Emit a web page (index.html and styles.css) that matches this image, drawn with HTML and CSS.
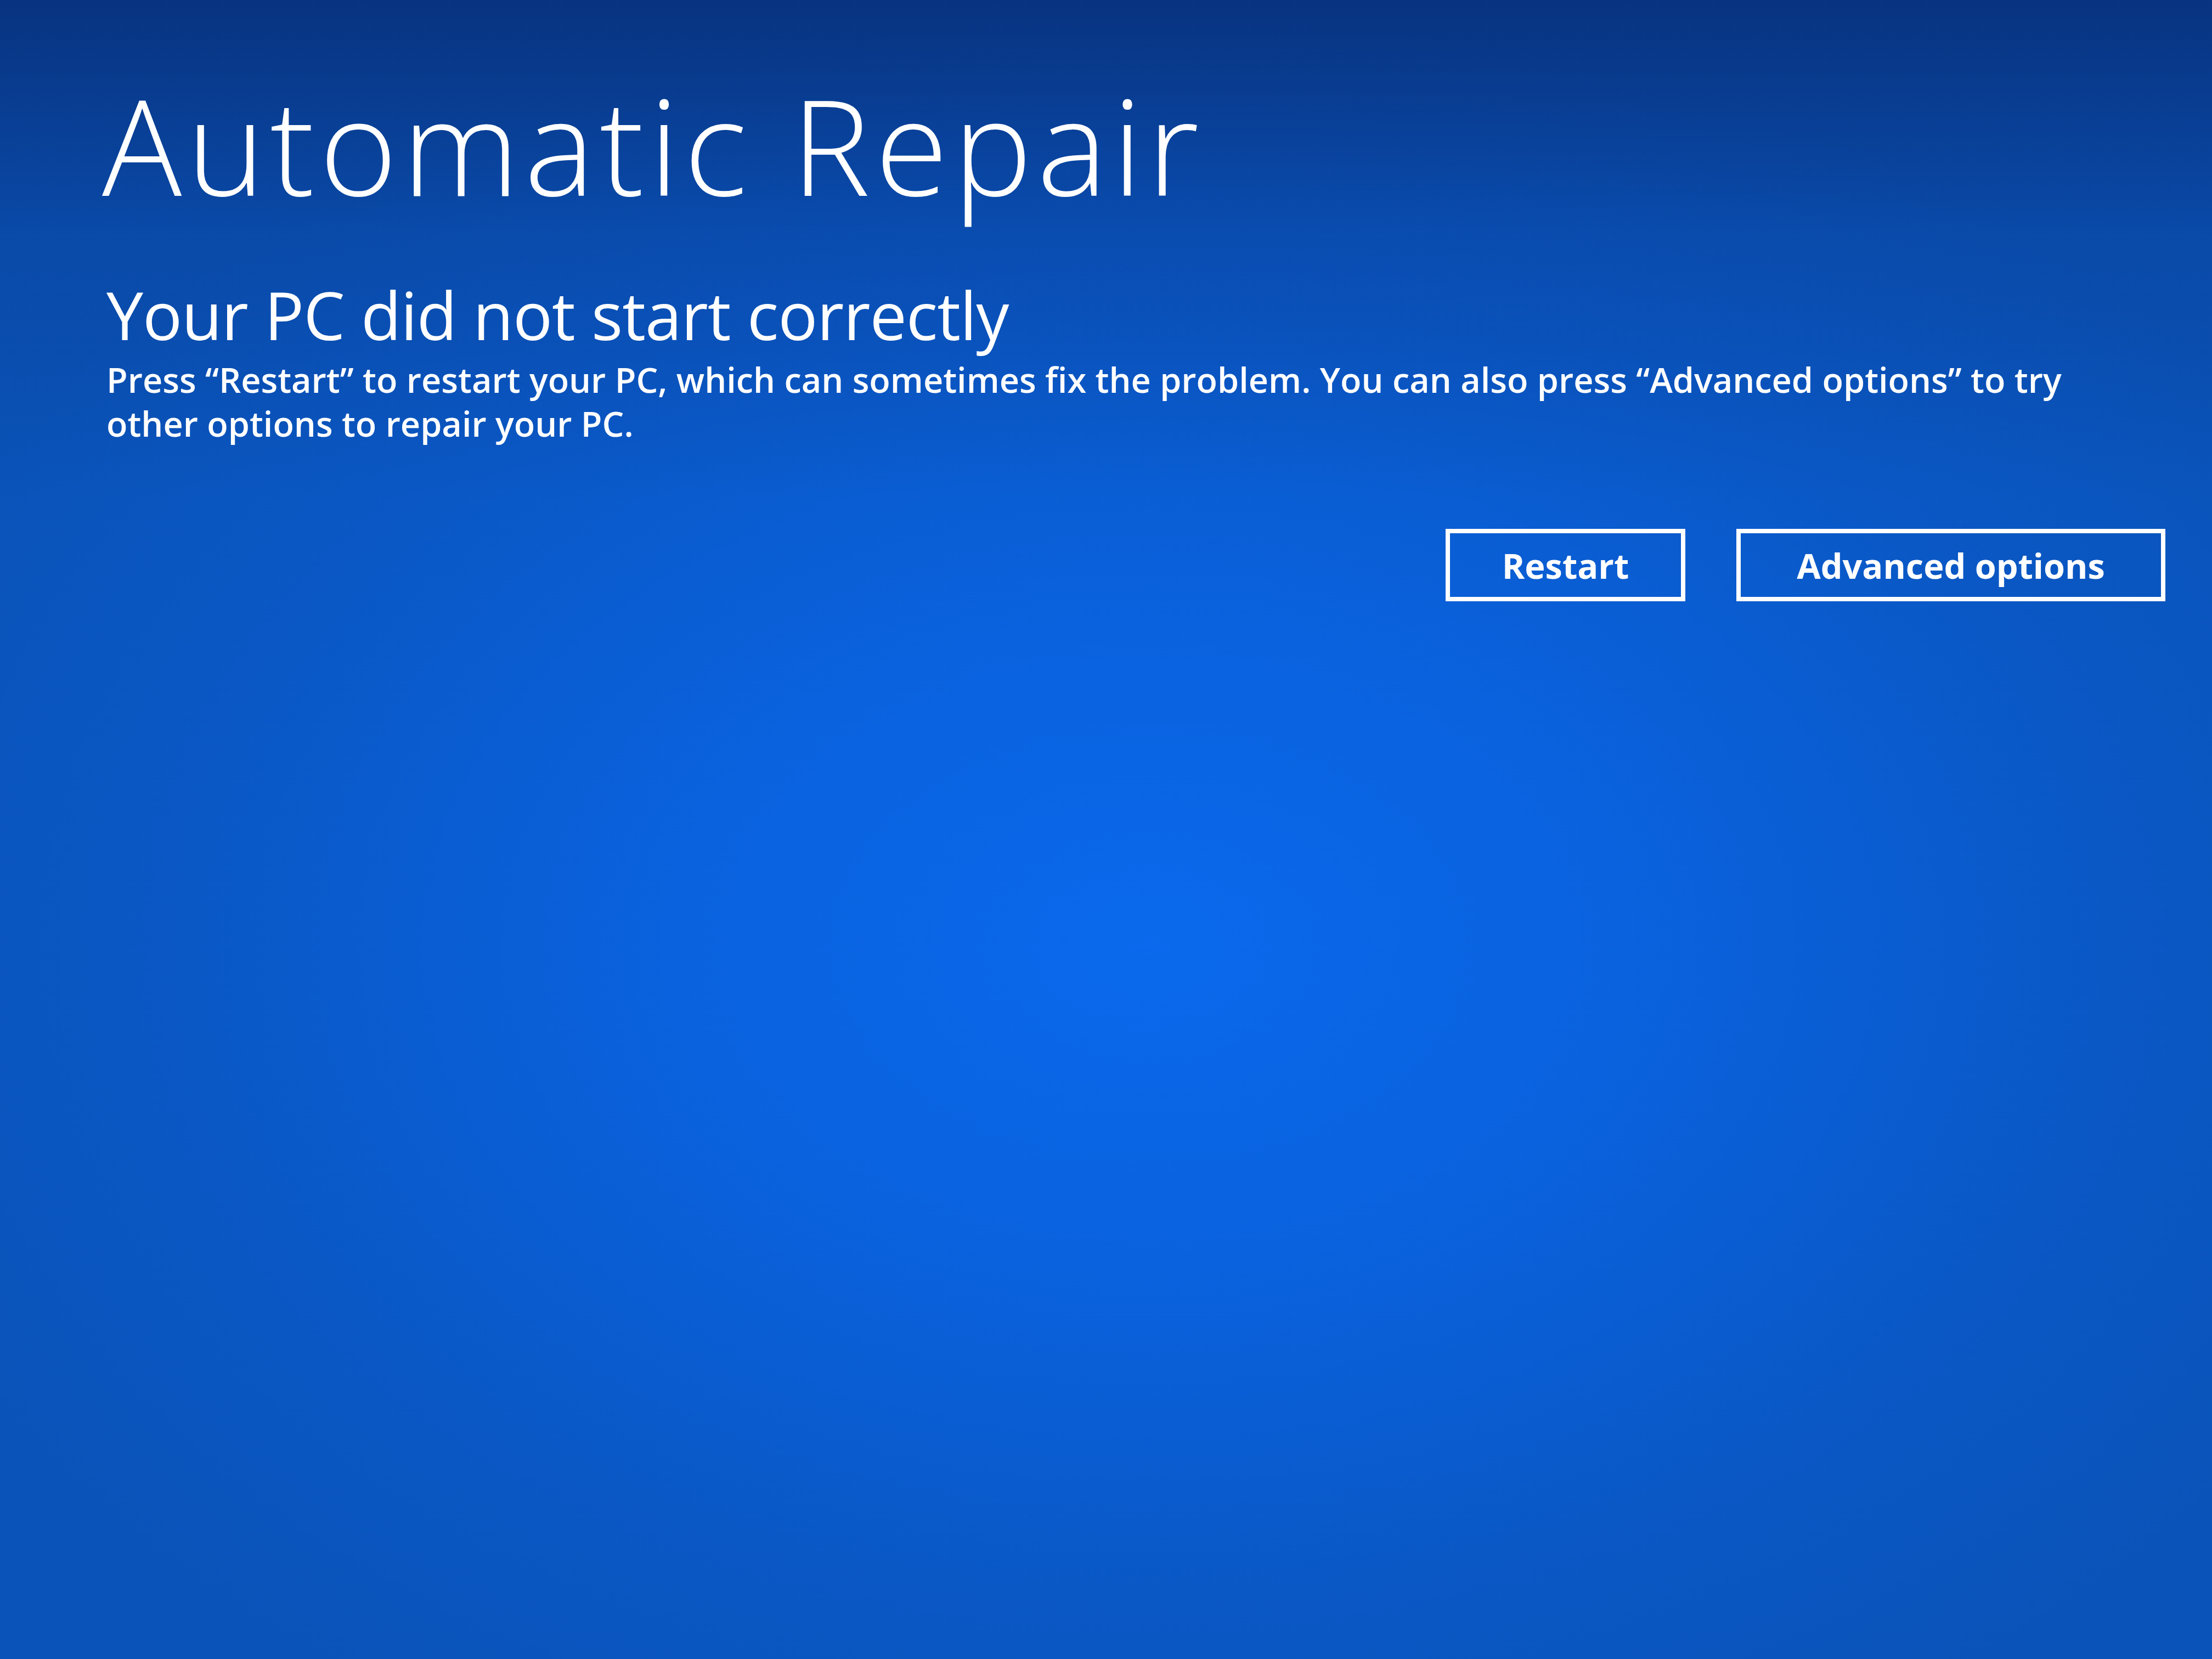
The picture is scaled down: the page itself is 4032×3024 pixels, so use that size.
FILE: index.html
```html
<!DOCTYPE html>
<html lang="en">
<head>
<meta charset="utf-8">
<title>Automatic Repair</title>
<link rel="stylesheet" href="styles.css">
</head>
<body>
<main class="screen">
  <h1 class="title">Automatic Repair</h1>
  <section class="message">
    <h2 class="subtitle">Your PC did not start correctly</h2>
    <p class="desc">Press “Restart” to restart your PC, which can sometimes fix the problem. You can also press “Advanced options” to try other options to repair your PC.</p>
  </section>
  <div class="actions">
    <button class="btn btn-restart">Restart</button>
    <button class="btn btn-advanced">Advanced options</button>
  </div>
</main>
</body>
</html>
```
FILE: styles.css
```css
html, body {
  margin: 0;
  padding: 0;
  width: 4032px;
  height: 3024px;
  overflow: hidden;
}
body {
  background-color: #0a57c6;
  background-image:
    linear-gradient(to bottom, rgba(7, 34, 98, 0.65) 0%, rgba(8, 40, 110, 0.22) 14%, rgba(8, 40, 110, 0) 30%),
    radial-gradient(ellipse 62% 56% at 52% 57%, #0a69ec 0%, #0a62de 35%, #0a58c6 70%, #0a53b8 100%);
  color: #ffffff;
  font-family: "Open Sans", "Noto Sans", "Liberation Sans", sans-serif;
}
.screen {
  display: flex;
  flex-direction: column;
  padding: 118px 85px 0 186px;
}
.title {
  margin: 0;
  font-weight: 300;
  font-size: 242px;
  line-height: 1.2;
  letter-spacing: 9px;
}
.message {
  margin-top: 100px;
  display: flex;
  flex-direction: column;
}
.subtitle {
  margin: 0 0 0 8px;
  font-weight: 400;
  font-size: 120px;
  line-height: 1.1;
  letter-spacing: -1px;
}
.desc {
  margin: 12px 0 0 8px;
  width: 3690px;
  font-weight: 600;
  font-size: 63px;
  line-height: 80px;
  letter-spacing: 0;
}
.actions {
  display: flex;
  justify-content: flex-end;
  gap: 93px;
  margin-top: 152px;
}
.btn {
  height: 132px;
  box-sizing: border-box;
  border: 8px solid #ffffff;
  background: transparent;
  color: #ffffff;
  font-family: "Open Sans", "Noto Sans", "Liberation Sans", sans-serif;
  font-weight: 700;
  font-size: 63px;
  letter-spacing: 0;
  padding: 0;
  display: flex;
  align-items: center;
  justify-content: center;
}
.btn-restart {
  width: 437px;
}
.btn-advanced {
  width: 782px;
}
```
